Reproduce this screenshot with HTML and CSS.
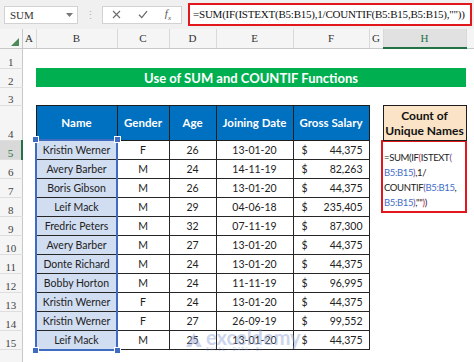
FILE: index.html
```html
<!DOCTYPE html>
<html lang="en">
<head>
    <meta charset="UTF-8">
    <meta name="viewport" content="width=device-width, initial-scale=1.0">
    <title>Use of SUM and COUNTIF Functions</title>
    <link rel="stylesheet" href="styles.css">
</head>
<body>

<div class="toolbar">
    <div class="namebox">
        <span>SUM</span>
        <svg class="caret" width="7" height="4" viewBox="0 0 7 4"><path d="M0 0h7L3.5 4z" fill="#777"/></svg>
    </div>
    <div class="grip">⋮</div>
    <div class="fnbox">
        <svg width="9" height="9" viewBox="0 0 9 9"><path d="M1 1l7 7M8 1L1 8" stroke="#6b6b6b" stroke-width="1.1" fill="none"/></svg>
        <svg width="10" height="9" viewBox="0 0 10 9"><path d="M1 4.8l2.8 2.8L9 1.2" stroke="#6b6b6b" stroke-width="1.3" fill="none"/></svg>
        <span class="fx">f<sub>x</sub></span>
    </div>
    <div class="formula">=SUM(IF(ISTEXT(B5:B15),1/COUNTIF(B5:B15,B5:B15),""))</div>
</div>

<div class="sheet-wrap">
    <table class="sheet">
        <colgroup>
            <col class="w-rh"><col class="w-a"><col class="w-b"><col class="w-c"><col class="w-d">
            <col class="w-e"><col class="w-f"><col class="w-g"><col class="w-h"><col class="w-i">
        </colgroup>
        <thead>
            <tr class="colhead">
                <th class="corner"><span class="tri"></span></th>
                <th>A</th><th>B</th><th>C</th><th>D</th><th>E</th><th>F</th><th>G</th>
                <th class="active">H</th><th></th>
            </tr>
        </thead>
        <tbody>
            <tr class="r1"><th class="rh">1</th><td colspan="9"></td></tr>
            <tr class="r2"><th class="rh">2</th><td></td><td colspan="7" class="banner">Use of SUM and COUNTIF Functions</td><td></td></tr>
            <tr class="r3"><th class="rh">3</th><td colspan="9"></td></tr>
            <tr class="r4">
                <th class="rh">4</th><td></td>
                <td class="hd">Name</td><td class="hd">Gender</td><td class="hd">Age</td>
                <td class="hd">Joining Date</td><td class="hd">Gross Salary</td>
                <td></td><td class="count">Count of<br>Unique Names</td><td></td>
            </tr>
            <tr class="row">
                <th class="rh sel">5</th><td></td>
                <td class="d name">Kristin Werner</td><td class="d">F</td><td class="d">26</td><td class="d">13-01-20</td>
                <td class="d money"><div><span>$</span><span>44,375</span></div></td>
                <td></td>
                <td rowspan="4" class="edit">
                    <div class="edit-box">=SUM(IF<b class="p1">(</b>ISTEXT<b class="p2">(</b><br><b class="ref">B5:B15</b><b class="p2">)</b>,1/<br>COUNTIF<b class="p2">(</b><b class="ref">B5:B15</b>,<br><b class="ref">B5:B15</b><b class="p2">)</b>,""<b class="p1">)</b>)</div>
                </td>
                <td></td>
            </tr>
            <tr class="row">
                <th class="rh">6</th><td></td>
                <td class="d name">Avery Barber</td><td class="d">M</td><td class="d">24</td><td class="d">14-11-19</td>
                <td class="d money"><div><span>$</span><span>82,263</span></div></td>
                <td></td><td></td>
            </tr>
            <tr class="row">
                <th class="rh">7</th><td></td>
                <td class="d name">Boris Gibson</td><td class="d">M</td><td class="d">26</td><td class="d">13-01-20</td>
                <td class="d money"><div><span>$</span><span>44,375</span></div></td>
                <td></td><td></td>
            </tr>
            <tr class="row">
                <th class="rh">8</th><td></td>
                <td class="d name">Leif Mack</td><td class="d">M</td><td class="d">29</td><td class="d">04-06-18</td>
                <td class="d money"><div><span>$</span><span>235,405</span></div></td>
                <td></td><td></td>
            </tr>
            <tr class="row">
                <th class="rh">9</th><td></td>
                <td class="d name">Fredric Peters</td><td class="d">M</td><td class="d">32</td><td class="d">07-11-19</td>
                <td class="d money"><div><span>$</span><span>87,300</span></div></td>
                <td></td><td></td><td></td>
            </tr>
            <tr class="row">
                <th class="rh">10</th><td></td>
                <td class="d name">Avery Barber</td><td class="d">M</td><td class="d">27</td><td class="d">13-01-20</td>
                <td class="d money"><div><span>$</span><span>44,375</span></div></td>
                <td></td><td></td><td></td>
            </tr>
            <tr class="row">
                <th class="rh">11</th><td></td>
                <td class="d name">Donte Richard</td><td class="d">M</td><td class="d">24</td><td class="d">13-01-20</td>
                <td class="d money"><div><span>$</span><span>44,375</span></div></td>
                <td></td><td></td><td></td>
            </tr>
            <tr class="row">
                <th class="rh">12</th><td></td>
                <td class="d name">Bobby Horton</td><td class="d">M</td><td class="d">24</td><td class="d">11-11-19</td>
                <td class="d money"><div><span>$</span><span>96,995</span></div></td>
                <td></td><td></td><td></td>
            </tr>
            <tr class="row">
                <th class="rh">13</th><td></td>
                <td class="d name">Kristin Werner</td><td class="d">F</td><td class="d">24</td><td class="d">13-01-20</td>
                <td class="d money"><div><span>$</span><span>44,375</span></div></td>
                <td></td><td></td><td></td>
            </tr>
            <tr class="row">
                <th class="rh">14</th><td></td>
                <td class="d name">Kristin Werner</td><td class="d">F</td><td class="d">27</td><td class="d">26-09-19</td>
                <td class="d money"><div><span>$</span><span>99,552</span></div></td>
                <td></td><td></td><td></td>
            </tr>
            <tr class="row">
                <th class="rh">15</th><td></td>
                <td class="d name">Leif Mack</td><td class="d">M</td><td class="d">25</td><td class="d">13-01-20</td>
                <td class="d money"><div><span>$</span><span>44,375</span></div></td>
                <td></td><td></td><td></td>
            </tr>
            <tr class="row"><th class="rh"></th><td colspan="9"></td></tr>
        </tbody>
    </table>

    <!-- highlighted range B5:B15 from the formula being edited -->
    <div class="range-sel">
        <i class="hdl tl"></i><i class="hdl tr"></i><i class="hdl bl"></i><i class="hdl br"></i>
    </div>

    <div class="watermark">
        <svg width="20" height="18" viewBox="0 0 20 18"><path d="M2 16L10 2l8 14z" fill="#8fa3d6"/><path d="M7 16l3-5 3 5z" fill="#fff"/></svg>
        <div class="wm-text">
            <span class="wm-name">exceldemy</span>
            <span class="wm-sub">EXCEL · DATA · BI</span>
        </div>
    </div>
</div>

</body>
</html>
```

FILE: styles.css
```css
body {
    margin: 0;
    width: 474px;
    overflow: hidden;
    background-color: white;
    font-family: Lato, "Liberation Sans", sans-serif;
    color: #111;
}

/* formula bar */
.toolbar {
    display: flex;
    align-items: center;
    height: 29px;
    padding-left: 4px;
    box-sizing: border-box;
    background-color: #f0f0f0;
}
.namebox {
    box-sizing: border-box;
    width: 74px;
    height: 18px;
    display: flex;
    align-items: center;
    justify-content: space-between;
    padding: 0 4px 0 5px;
    background-color: white;
    border: 1px solid #d2d2d2;
    font: 11px "Liberation Serif", serif;
    color: #333;
}
.grip {
    width: 24px;
    text-align: center;
    color: #b4b4b4;
    font-size: 11px;
}
.fnbox {
    box-sizing: border-box;
    width: 80px;
    height: 18px;
    margin-right: 6px;
    display: flex;
    align-items: center;
    justify-content: space-between;
    padding: 0 10px 0 9px;
    background-color: white;
    border: 1px solid #d2d2d2;
}
.fx {
    font: italic 11px "Liberation Serif", serif;
    color: #555;
}
.fx sub {
    font-size: 7px;
}
.formula {
    box-sizing: border-box;
    width: 284px;
    height: 23px;
    padding-left: 3px;
    border: 2px solid #e2171d;
    background-color: white;
    font: 11px "Liberation Serif", serif;
    letter-spacing: -0.22px;
    line-height: 19px;
    white-space: nowrap;
    overflow: hidden;
}

/* sheet */
.sheet-wrap {
    position: relative;
}
.sheet {
    border-collapse: collapse;
    table-layout: fixed;
    width: 474px;
}
.sheet th,
.sheet td {
    padding: 0;
}
.w-rh { width: 22px; }
.w-a { width: 14px; }
.w-b { width: 81px; }
.w-c { width: 52px; }
.w-d { width: 47px; }
.w-e { width: 77px; }
.w-f { width: 76px; }
.w-g { width: 14px; }
.w-h { width: 83px; }
.w-i { width: 8px; }

.colhead {
    height: 19px;
}
.colhead th {
    background-color: #f5f5f5;
    border-right: 1px solid #d9d9d9;
    border-bottom: 1px solid #c8c8c8;
    font: 11px "Liberation Serif", serif;
    color: #333;
}
.colhead th.active {
    background-color: #e1e1e1;
    border-bottom: 2px solid #217346;
    color: #217346;
}
.colhead th.corner {
    position: relative;
    border-right: 1px solid #c8c8c8;
}
.tri {
    position: absolute;
    right: 3px;
    bottom: 2px;
    width: 0;
    height: 0;
    border-left: 8px solid transparent;
    border-bottom: 8px solid #4c8a5c;
}

.rh {
    background-color: #f5f5f5;
    border-right: 1px solid #c8c8c8;
    border-bottom: 1px solid #dedede;
    font: 11px "Liberation Serif", serif;
    font-weight: normal;
    color: #444;
    vertical-align: bottom;
    padding-bottom: 2px;
}
.rh.sel {
    background-color: #d9d9d9;
    border-right: 2px solid #217346;
    color: #217346;
}

.r1 { height: 20px; }
.r2 { height: 19px; }
.r3 { height: 18px; }
.r4 { height: 35px; }
.row { height: 19px; }

.banner {
    background-color: #00b050;
    color: white;
    font-weight: bold;
    font-size: 13px;
    text-align: center;
}
.hd {
    background-color: #0070c0;
    color: white;
    font-weight: bold;
    font-size: 11.5px;
    text-align: center;
    border: 1px solid #1d1d1d;
}
.count {
    background-color: #fae3c6;
    border: 1px solid #1d1d1d;
    font-weight: bold;
    font-size: 12px;
    line-height: 15px;
    text-align: center;
}
.d {
    border: 1px solid #262626;
    font-size: 10.5px;
    text-align: center;
    color: #222;
}
.d.name {
    background-color: #d1ddf1;
}
.money div {
    display: flex;
    justify-content: space-between;
    padding: 0 6px 0 8px;
}

.edit {
    vertical-align: top;
}
.edit-box {
    box-sizing: border-box;
    width: 86px;
    height: 73px;
    margin: -1px 0 0 -2px;
    padding: 8px 0 0 1px;
    border: 2px solid #e2171d;
    background-color: white;
    font-size: 9.5px;
    letter-spacing: -0.35px;
    line-height: 15.3px;
    white-space: nowrap;
    overflow: hidden;
    color: #222;
}
.edit-box b {
    font-weight: normal;
}
.edit-box .ref { color: #3f6ec8; }
.edit-box .p1 { color: #c2185b; }
.edit-box .p2 { color: #7b3fa0; }

.range-sel {
    position: absolute;
    left: 35px;
    top: 110px;
    width: 83px;
    height: 212px;
    box-sizing: border-box;
    border: 2px solid #3f6cc0;
}
.hdl {
    position: absolute;
    width: 5px;
    height: 5px;
    background-color: #3f6cc0;
    border: 1px solid white;
}
.hdl.tl { left: -5px; top: -5px; }
.hdl.tr { right: -5px; top: -5px; }
.hdl.bl { left: -5px; bottom: -5px; }
.hdl.br { right: -5px; bottom: -5px; }

.watermark {
    position: absolute;
    left: 184px;
    top: 298px;
    display: flex;
    align-items: center;
    gap: 2px;
    opacity: 0.45;
}
.wm-text {
    display: flex;
    flex-direction: column;
    line-height: 1;
}
.wm-name {
    font-size: 20px;
    font-weight: bold;
    color: #8fa3d6;
}
.wm-sub {
    font-size: 5px;
    letter-spacing: 1px;
    color: #8fa3d6;
}
```
